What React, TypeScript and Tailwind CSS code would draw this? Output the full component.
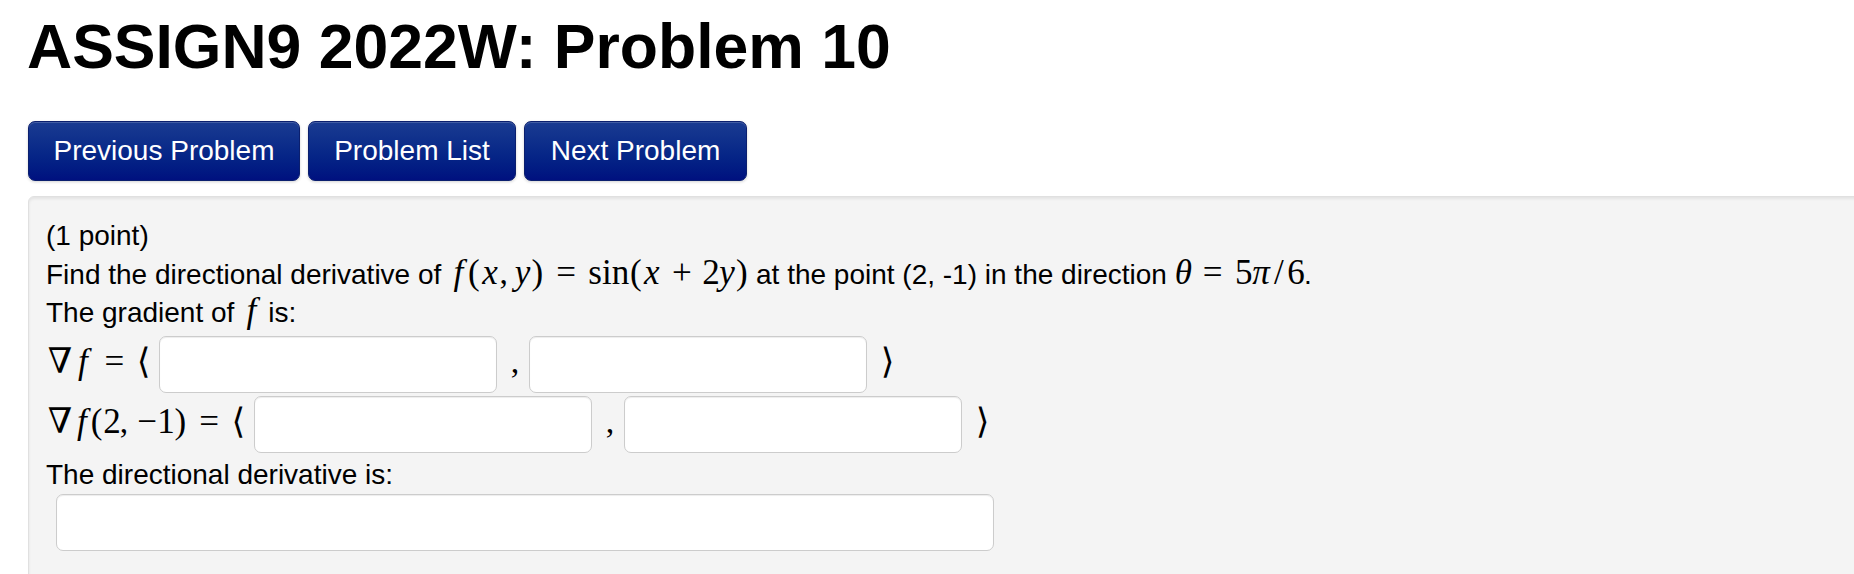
import React from "react";

function G({ c, cls }: { c: string; cls: string }) {
  return (
    <span className={"inline-block text-center " + cls}>
      <span className="text-[1.05em]">{c}</span>
    </span>
  );
}

const serif = "font-['Liberation_Serif','DejaVu_Serif',serif]";

function Input({ cls }: { cls: string }) {
  return (
    <span
      className={
        "block h-[57px] shrink-0 rounded-[7px] border border-[#cccccc] bg-white shadow-[inset_0_1px_1px_rgba(0,0,0,0.075)] " +
        cls
      }
    />
  );
}

function Comma() {
  return (
    <span className={"block h-[57px] w-[22px] text-right leading-[52px] text-[34px] " + serif}>,</span>
  );
}

function Close() {
  return (
    <span className={"ml-[14px] block h-[57px] leading-[52px] text-[33.4px] " + serif}>
      <G c="⟩" cls="w-[0.389em]" />
    </span>
  );
}

export default function App() {
  return (
    <div className="h-[574px] w-[1854px] overflow-hidden bg-white font-['Liberation_Sans',Arial,sans-serif] text-black">
      <h1 className="ml-[27px] pt-[15px] text-[62.5px] font-bold leading-[62px] whitespace-nowrap">
        ASSIGN9 2022W: Problem 10
      </h1>

      <div className="ml-[28px] mt-[44px] flex gap-2">
        {["Previous Problem", "Problem List", "Next Problem"].map((t, i) => (
          <button
            key={t}
            className={
              "flex h-[60px] items-center justify-center rounded-[7px] border border-[#0b1f6e] bg-linear-to-b from-[#1a3b91] to-[#00107f] text-[28px] text-white shadow-[inset_0_1px_0_rgba(255,255,255,0.18),0_1px_3px_rgba(0,0,0,0.18)] " +
              (i === 0 ? "w-[272px]" : i === 1 ? "w-[208px]" : "w-[223px]")
            }
          >
            {t}
          </button>
        ))}
      </div>

      <div className="ml-[28px] mt-[15px] w-[1860px] rounded-tl-[6px] border border-[#e0e0e0] bg-[#f4f4f4] pb-[40px] pl-[17px] pt-[20px] text-[28px] leading-[38.6px] shadow-[inset_0_2px_3px_rgba(0,0,0,0.07)]">
        <div>(1 point)</div>
        <div className="whitespace-nowrap">
          Find the directional derivative of{" "}
          <span className={"text-[33.4px] leading-[30px] " + serif}>
            <G c="f" cls="w-[0.55em] italic" />
            <G c="(" cls="w-[0.389em]" />
            <G c="x" cls="w-[0.572em] italic" />
            <span className="inline-block w-[0.445em] text-left">,</span>
            <G c="y" cls="w-[0.49em] italic" />
            <G c=")" cls="w-[0.389em]" />
            <G c="=" cls="w-[1.334em]" />
            <span className="inline-block w-[1.228em] text-left">
              <span className="text-[1.05em]">sin</span>
            </span>
            <G c="(" cls="w-[0.389em]" />
            <G c="x" cls="w-[0.572em] italic" />
            <G c="+" cls="w-[1.222em]" />
            <G c="2" cls="w-[0.5em]" />
            <G c="y" cls="w-[0.49em] italic" />
            <G c=")" cls="w-[0.389em]" />
          </span>{" "}
          at the point (2, -1) in the direction{" "}
          <span className={"text-[33.4px] leading-[30px] " + serif}>
            <G c="θ" cls="w-[0.469em] italic" />
            <G c="=" cls="w-[1.334em]" />
            <G c="5" cls="w-[0.5em]" />
            <G c="π" cls="w-[0.57em] italic" />
            <G c="/" cls="w-[0.5em]" />
            <G c="6" cls="w-[0.5em]" />
          </span>
          .
        </div>
        <div className="whitespace-nowrap">
          The gradient of{" "}
          <span className={"text-[33.4px] leading-[30px] " + serif}>
            <G c="f" cls="w-[0.55em] italic" />
          </span>{" "}
          is:
        </div>

        <div className="flex h-[60px] items-start pt-[3px]">
          <span className={"block h-[57px] whitespace-nowrap text-[33.4px] leading-[52px] " + serif}>
            <G c="∇" cls="w-[0.833em]" />
            <G c="f" cls="w-[0.55em] italic" />
            <G c="=" cls="w-[1.334em]" />
            <G c="⟨" cls="w-[0.389em]" />
          </span>
          <Input cls="ml-[9.5px] w-[338px]" />
          <Comma />
          <Input cls="ml-[9.5px] w-[338px]" />
          <Close />
        </div>

        <div className="flex h-[60px] items-start pt-[3px]">
          <span className={"block h-[57px] whitespace-nowrap text-[33.4px] leading-[52px] " + serif}>
            <G c="∇" cls="w-[0.833em]" />
            <G c="f" cls="w-[0.49em] italic" />
            <G c="(" cls="w-[0.389em]" />
            <G c="2" cls="w-[0.5em]" />
            <span className="inline-block w-[0.52em] text-left">,</span>
            <span className="inline-block w-[0.6em] text-left">
              <span className="text-[1.05em]">−</span>
            </span>
            <G c="1" cls="w-[0.5em]" />
            <G c=")" cls="w-[0.389em]" />
            <G c="=" cls="w-[1.334em]" />
            <G c="⟨" cls="w-[0.397em]" />
          </span>
          <Input cls="ml-[9.5px] w-[338px]" />
          <Comma />
          <Input cls="ml-[9.5px] w-[338px]" />
          <Close />
        </div>

        <div className="pt-[3px]">The directional derivative is:</div>
        <div>
          <Input cls="ml-[9.5px] w-[938px]" />
        </div>
      </div>
    </div>
  );
}
